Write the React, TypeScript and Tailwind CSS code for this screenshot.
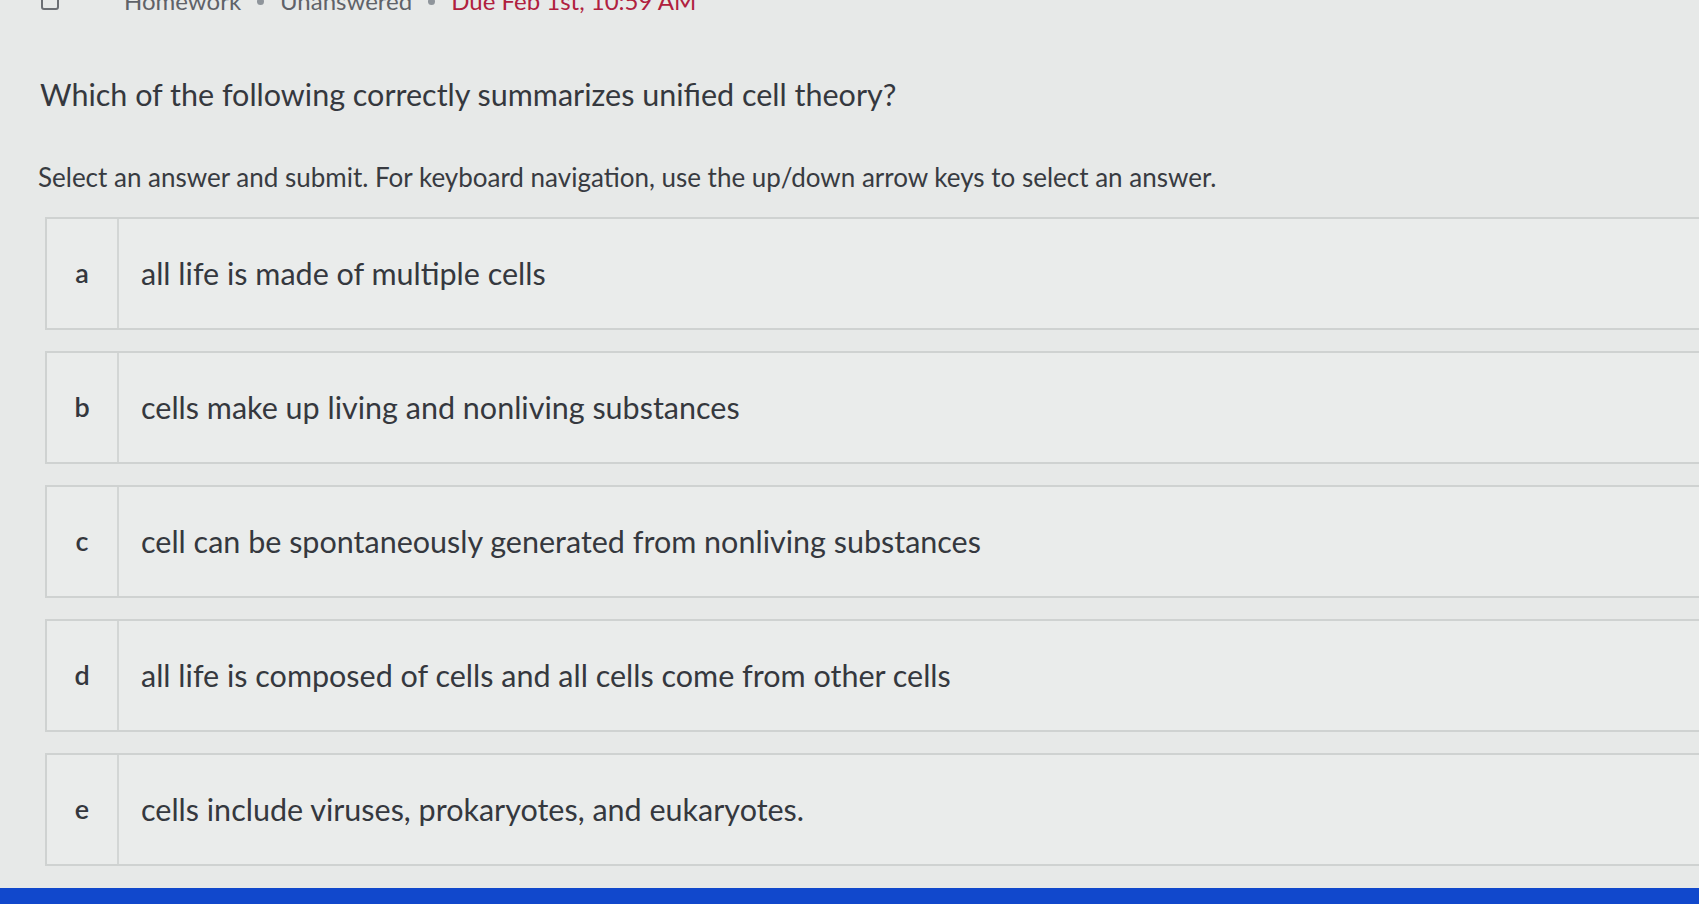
import React from 'react';

const options = [
  { key: 'a', text: 'all life is made of multiple cells' },
  { key: 'b', text: 'cells make up living and nonliving substances' },
  { key: 'c', text: 'cell can be spontaneously generated from nonliving substances' },
  { key: 'd', text: 'all life is composed of cells and all cells come from other cells' },
  { key: 'e', text: 'cells include viruses, prokaryotes, and eukaryotes.' },
];

export default function App() {
  return (
    <div className="h-[904px] w-full overflow-hidden bg-[#e7e9e8] text-[#3b3e44] font-['Lato','Noto_Sans',sans-serif] flex flex-col">
      {/* Header strip, cut off at the top of the screen */}
      <div className="flex items-center gap-4 pl-[40px] mt-[-13px] h-[28px] text-[24px] leading-none">
        <svg width="20" height="20" viewBox="0 0 20 20" className="text-[#6b6e73]">
          <rect x="2" y="2" width="16" height="16" rx="2" fill="none" stroke="currentColor" strokeWidth="2" />
        </svg>
        <div className="flex items-center gap-4 ml-[48px]">
          <span className="text-[#5f6268]">Homework</span>
          <span className="w-[7px] h-[7px] rounded-full bg-[#8f959b]" />
          <span className="text-[#5f6268]">Unanswered</span>
          <span className="w-[7px] h-[7px] rounded-full bg-[#8f959b]" />
          <span className="text-[#b0203e]">Due Feb 1st, 10:59 AM</span>
        </div>
      </div>

      <h1 className="ml-[40px] mt-[60px] text-[30.5px] leading-[38px] text-[#35383e]">
        Which of the following correctly summarizes unified cell theory?
      </h1>

      <p className="ml-[38px] mt-[48px] text-[26px] leading-[32px] text-[#383b41]">
        Select an answer and submit. For keyboard navigation, use the up/down arrow keys to select an answer.
      </p>

      <div className="ml-[45px] mr-[-20px] mt-[24px] flex flex-col gap-[21px]">
        {options.map(o => (
          <div key={o.key} className="flex h-[113px] border-2 border-[#cfd2d1] bg-[#eaeceb]">
            <div className="w-[72px] flex items-center justify-center border-r-2 border-[#d3d6d5] text-[27px] font-semibold text-[#34373d]">
              {o.key}
            </div>
            <div className="flex items-center pl-[22px] text-[30.5px] text-[#35383e]">
              {o.text}
            </div>
          </div>
        ))}
      </div>

      <div className="mt-auto h-[16px] bg-[#1148cc]" />
    </div>
  );
}
